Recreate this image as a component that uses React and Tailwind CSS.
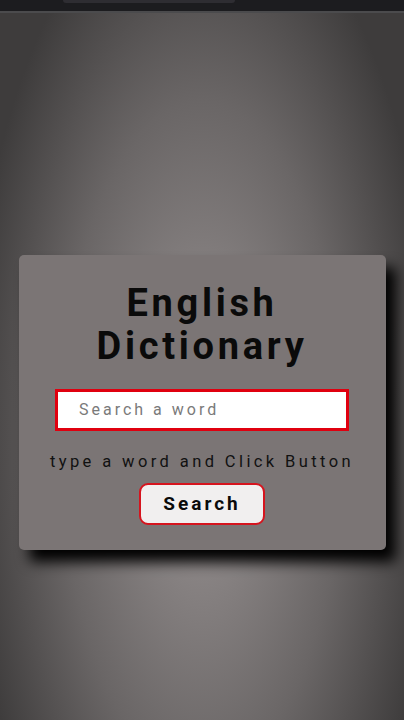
export default function App() {
  return (
    <div
      className="w-[404px] h-[720px] flex flex-col overflow-hidden"
      style={{ fontFamily: "Roboto, 'Liberation Sans', sans-serif" }}
    >
      <div className="h-[11px] bg-[#1c1c1f] flex shrink-0">
        <div className="ml-[63px] w-[172px] h-[3px] bg-[#2e2d32] rounded-b-sm" />
      </div>
      <div className="h-[2px] bg-[#4b4b4d] shrink-0" />
      <div className="flex-1 flex flex-col items-center bg-[radial-gradient(ellipse_235px_560px_at_50%_60%,#9c9696_0%,#6a6666_60%,#3e3c3c_100%)]">
        <div className="mt-[242px] w-[367px] h-[295px] bg-[#7b7575] rounded-[5px] shadow-[10px_12px_14px_#000] flex flex-col items-center">
          <h1 className="mt-[27px] text-[38px] leading-[43px] font-bold tracking-[3.7px] text-[#0a0a0a] text-center">
            English
            <br />
            Dictionary
          </h1>
          <div className="mt-[21px] w-[294px] h-[42px] bg-white border-[3px] border-[#e0000f] flex items-center pl-[21px]">
            <span className="text-[16px] tracking-[3px] text-[#7a7a7a]">Search a word</span>
          </div>
          <p className="mt-[19px] text-[16.5px] tracking-[3.4px] text-[#111]">type a word and Click Button</p>
          <div className="mt-[8px] w-[126px] h-[42px] bg-[#f1efef] border-2 border-[#d6141e] rounded-[9px] flex items-center justify-center">
            <span className="text-[19px] font-bold tracking-[3px] text-[#0a0a0a]">Search</span>
          </div>
        </div>
      </div>
    </div>
  );
}
